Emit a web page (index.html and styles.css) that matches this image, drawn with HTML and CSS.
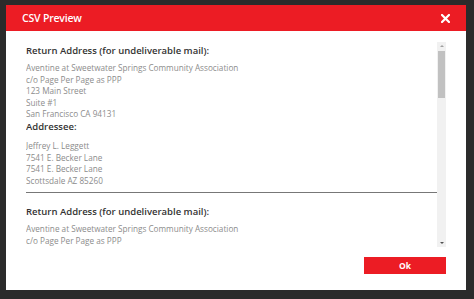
FILE: index.html
```html
<!DOCTYPE html>
<html>
<head>
<meta charset="utf-8">
<link rel="stylesheet" href="styles.css">
</head>
<body>
<div class="modal">
  <div class="modal-header">
    <span class="title">CSV Preview</span>
    <svg class="close" width="9" height="9" viewBox="0 0 9 9"><path d="M1 1L8 8M8 1L1 8" stroke="#fff" stroke-width="2.2" stroke-linecap="square"/></svg>
  </div>
  <div class="modal-body">
    <div class="scroll-wrap">
      <div class="scroll-content">
        <div class="record">
          <div class="heading">Return Address (for undeliverable mail):</div>
          <div class="line">Aventine at Sweetwater Springs Community Association</div>
          <div class="line">c/o Page Per Page as PPP</div>
          <div class="line">123 Main Street</div>
          <div class="line">Suite #1</div>
          <div class="line">San Francisco CA 94131</div>
          <div class="heading sub">Addressee:</div>
          <div class="line">Jeffrey L. Leggett</div>
          <div class="line">7541 E. Becker Lane</div>
          <div class="line">7541 E. Becker Lane</div>
          <div class="line">Scottsdale AZ 85260</div>
        </div>
        <div class="record last">
          <div class="heading">Return Address (for undeliverable mail):</div>
          <div class="line">Aventine at Sweetwater Springs Community Association</div>
          <div class="line">c/o Page Per Page as PPP</div>
        </div>
      </div>
      <div class="scrollbar">
        <div class="arrow up"></div>
        <div class="track"><div class="thumb"></div></div>
        <div class="arrow down"></div>
      </div>
    </div>
    <div class="footer">
      <button class="ok">Ok</button>
    </div>
  </div>
</div>
</body>
</html>
```

FILE: styles.css
```css
html, body {
  margin: 0;
  padding: 0;
  background: #2b2b2b;
  width: 474px;
  height: 299px;
  overflow: hidden;
  font-family: "Open Sans", "Liberation Sans", sans-serif;
}
body {
  padding: 5px 8px 0 6px;
  box-sizing: border-box;
}
.modal {
  width: 460px;
  height: 285px;
  background: #fff;
  display: flex;
  flex-direction: column;
}
.modal-header {
  height: 26px;
  background: #ec1c24;
  display: flex;
  align-items: center;
  justify-content: space-between;
  padding: 0 16px 0 16px;
  flex-shrink: 0;
}
.title {
  color: #fff;
  font-weight: 600;
  font-size: 10.5px;
  letter-spacing: -0.2px;
}
.close {
  display: block;
}
.modal-body {
  flex: 1;
  display: flex;
  flex-direction: column;
  padding: 11px 20px 16px 20px;
  min-height: 0;
}
.scroll-wrap {
  height: 205px;
  display: flex;
  flex-shrink: 0;
}
.scroll-content {
  flex: 1;
  overflow: hidden;
  padding-top: 2px;
}
.record {
  border-bottom: 1px solid #777;
  padding-bottom: 6px;
  margin-bottom: 12px;
}
.record.last {
  border-bottom: none;
  padding-bottom: 0;
  margin-bottom: 0;
}
.heading {
  font-weight: 600;
  font-size: 9.5px;
  line-height: 14px;
  color: #333;
  margin-bottom: 4px;
}
.heading.sub {
  margin-top: 0;
  margin-bottom: 6px;
}
.line {
  font-size: 8.2px;
  line-height: 11.6px;
  color: #8c8c8c;
  white-space: nowrap;
}
.scrollbar {
  width: 9px;
  background: #f1f1f1;
  display: flex;
  flex-direction: column;
}
.arrow {
  height: 9px;
  position: relative;
}
.arrow.up::after, .arrow.down::after {
  content: "";
  position: absolute;
  left: 2.5px;
  width: 0;
  height: 0;
  border-left: 2px solid transparent;
  border-right: 2px solid transparent;
}
.arrow.up::after {
  top: 3px;
  border-bottom: 2px solid #a0a0a0;
}
.arrow.down::after {
  top: 4px;
  border-top: 2px solid #505050;
}
.track {
  flex: 1;
}
.thumb {
  height: 47px;
  background: #c1c1c1;
  margin: 0 1px;
}
.footer {
  display: flex;
  justify-content: flex-end;
  margin-top: 10px;
}
.ok {
  width: 82px;
  height: 17px;
  background: #ec1c24;
  border: none;
  color: #fff;
  font-family: "Open Sans", "Liberation Sans", sans-serif;
  font-weight: 700;
  font-size: 8.5px;
  padding: 0;
  margin: 0;
}
```
